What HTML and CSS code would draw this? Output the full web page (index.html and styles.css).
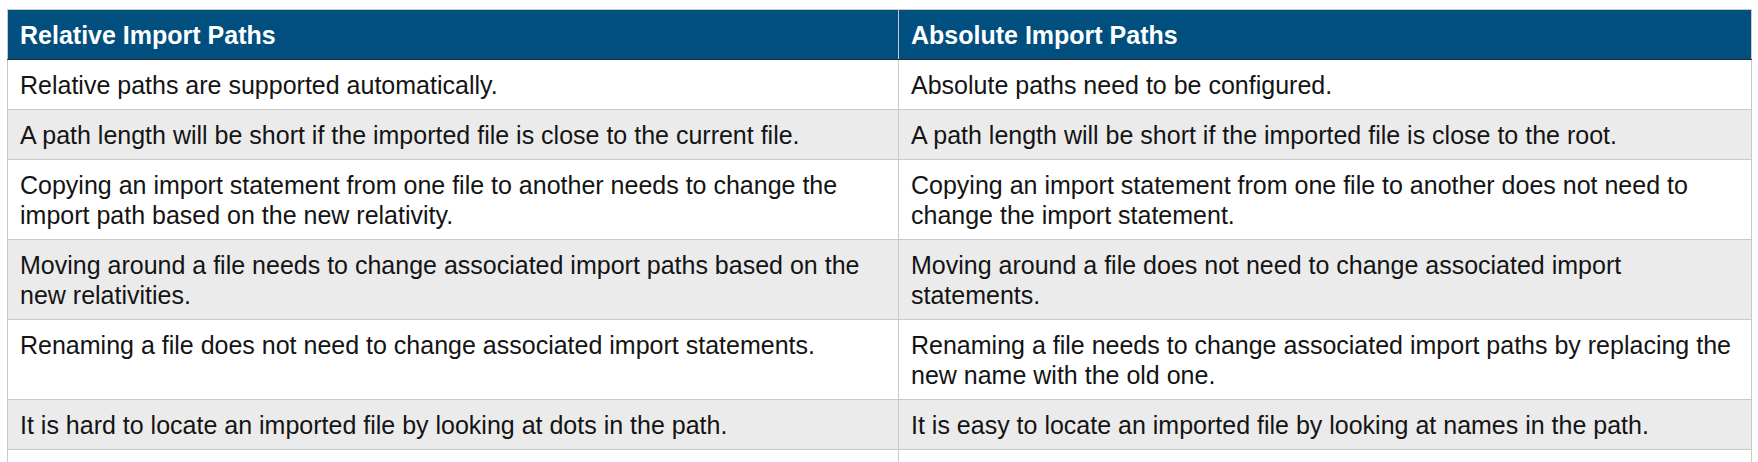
FILE: index.html
```html
<!DOCTYPE html>
<html lang="en">
<head>
<meta charset="utf-8">
<title>Relative vs Absolute Import Paths</title>
<link rel="stylesheet" href="styles.css">
</head>
<body>
<table class="cmp">
  <colgroup>
    <col class="col-a">
    <col class="col-b">
  </colgroup>
  <thead>
    <tr>
      <th>Relative Import Paths</th>
      <th>Absolute Import Paths</th>
    </tr>
  </thead>
  <tbody>
    <tr>
      <td>Relative paths are supported automatically.</td>
      <td>Absolute paths need to be configured.</td>
    </tr>
    <tr>
      <td>A path length will be short if the imported file is close to the current file.</td>
      <td>A path length will be short if the imported file is close to the root.</td>
    </tr>
    <tr>
      <td>Copying an import statement from one file to another needs to change the import path based on the new relativity.</td>
      <td>Copying an import statement from one file to another does not need to change the import statement.</td>
    </tr>
    <tr>
      <td>Moving around a file needs to change associated import paths based on the new relativities.</td>
      <td>Moving around a file does not need to change associated import statements.</td>
    </tr>
    <tr>
      <td>Renaming a file does not need to change associated import statements.</td>
      <td>Renaming a file needs to change associated import paths by replacing the new name with the old one.</td>
    </tr>
    <tr>
      <td>It is hard to locate an imported file by looking at dots in the path.</td>
      <td>It is easy to locate an imported file by looking at names in the path.</td>
    </tr>
    <tr class="empty">
      <td></td>
      <td></td>
    </tr>
  </tbody>
</table>
</body>
</html>
```

FILE: styles.css
```css
html, body {
  margin: 0;
  background: #ffffff;
}

body {
  padding: 9px 0 0 7px;
  font-family: "Liberation Sans", Arial, sans-serif;
  color: #141414;
}

.cmp {
  border-collapse: collapse;
  width: 1744px;
  table-layout: fixed;
  font-size: 25px;
  line-height: 30px;
}

.col-a { width: 891px; }
.col-b { width: 853px; }

.cmp th,
.cmp td {
  border: 1px solid #c9c9c9;
  padding: 10px 12px 9px 12px;
  text-align: left;
  vertical-align: top;
}

.cmp thead th {
  background: #004f7f;
  color: #ffffff;
  font-weight: bold;
  font-size: 25px;
  border-bottom: 1px solid #2c2c2c;
}

.cmp tbody tr:nth-child(odd) td {
  background: #ffffff;
}

.cmp tbody tr:nth-child(even) td {
  background: #ebebeb;
}

.cmp tr.empty td {
  height: 30px;
}
```
